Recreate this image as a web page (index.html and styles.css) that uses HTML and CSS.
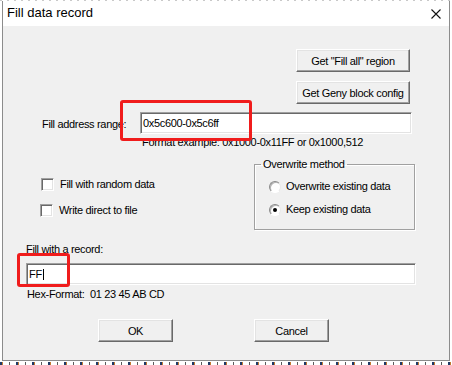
FILE: index.html
```html
<!DOCTYPE html>
<html lang="en">
<head>
    <meta charset="UTF-8">
    <meta name="viewport" content="width=device-width, initial-scale=1.0">
    <title>Fill data record</title>
    <link rel="stylesheet" href="styles.css">
</head>
<body>
    <div class="desk-top"></div>
    <div class="dialog">
        <div class="titlebar">
            <span class="title">Fill data record</span>
            <svg class="close" width="10" height="10" viewBox="0 0 10 10">
                <path d="M0.5 0.5 L9.5 9.5 M9.5 0.5 L0.5 9.5" stroke="#111" stroke-width="1.1" fill="none"/>
            </svg>
        </div>

        <div class="client">
            <div class="side-buttons">
                <button class="btn btn-wide">Get "Fill all" region</button>
                <button class="btn btn-wide">Get Geny block config</button>
            </div>

            <div class="address-row">
                <label class="address-label">Fill address range:</label>
                <div class="edit edit-address">
                    0x5c600-0x5c6ff
                    <span class="mark mark-address"></span>
                </div>
            </div>
            <p class="hint hint-address">Format example: 0x1000-0x11FF or 0x1000,512</p>

            <div class="options">
                <div class="checks">
                    <label class="check"><span class="box"></span>Fill with random data</label>
                    <label class="check check-second"><span class="box"></span>Write direct to file</label>
                </div>
                <fieldset class="group">
                    <legend>Overwrite method</legend>
                    <label class="radio"><span class="dot"></span>Overwrite existing data</label>
                    <label class="radio"><span class="dot dot-on"></span>Keep existing data</label>
                </fieldset>
            </div>

            <label class="record-label">Fill with a record:</label>
            <div class="edit edit-record">
                FF<span class="caret"></span>
                <span class="mark mark-record"></span>
            </div>
            <p class="hint hint-record">Hex-Format:&nbsp; 01 23 45 AB CD</p>

            <div class="footer">
                <button class="btn btn-ok">OK</button>
                <button class="btn btn-cancel">Cancel</button>
            </div>
        </div>
    </div>
    <div class="desk-bottom"></div>
</body>
</html>
```

FILE: styles.css
```css
body {
    margin: 0;
    background: #ffffff;
    font-family: "Liberation Sans", Arial, sans-serif;
    font-size: 11px;
    letter-spacing: -0.33px;
    color: #000;
    overflow: hidden;
}

.desk-top {
    height: 1px;
    background: repeating-linear-gradient(90deg, #c9c9c9 0 2px, transparent 2px 7px);
}

.dialog {
    margin-left: 2px;
    width: 448px;
    box-sizing: border-box;
    border: 1px solid #8c8c8c;
    border-top: none;
}

.titlebar {
    height: 25px;
    background: #ffffff;
    display: flex;
    justify-content: space-between;
    align-items: flex-start;
    padding: 4px 8px 0 4px;
    box-sizing: border-box;
}

.title {
    font-size: 13px;
    line-height: 15px;
    letter-spacing: 0;
    color: #000;
}

.close {
    margin-top: 4px;
}

.client {
    height: 334px;
    box-sizing: border-box;
    background: #f0f0f0;
    padding-top: 23px;
}

/* classic 3d push buttons */
.btn {
    font-family: inherit;
    font-size: 11px;
    letter-spacing: -0.33px;
    color: #000;
    background: #f0f0f0;
    height: 23px;
    padding: 0;
    border: 1px solid;
    border-color: #ffffff #696969 #696969 #ffffff;
    box-shadow: inset -1px -1px 0 #a0a0a0, inset 1px 1px 0 #e3e3e3;
    box-sizing: border-box;
}

.side-buttons {
    display: flex;
    flex-direction: column;
    align-items: flex-end;
    gap: 9px;
    padding-right: 39px;
}

.btn-wide {
    width: 114px;
}

.edit {
    position: relative;
    background: #ffffff;
    height: 22px;
    box-sizing: border-box;
    border: 1px solid;
    border-color: #a0a0a0 #ffffff #ffffff #a0a0a0;
    box-shadow: inset 1px 1px 0 #696969, inset -1px -1px 0 #e3e3e3;
    padding: 1px 0 0 2px;
    line-height: 17px;
    display: flex;
    align-items: center;
}

.address-row {
    display: flex;
    align-items: center;
    margin-top: 8px;
    padding-left: 39px;
}

.address-label {
    width: 98px;
    padding-top: 2px;
}

.edit-address {
    width: 272px;
}

.hint {
    margin: 0;
    line-height: 13px;
}

.hint-address {
    margin-top: 2px;
    padding-left: 139px;
}

/* red annotation boxes drawn over the screenshot */
.mark {
    position: absolute;
    border: 3px solid #f01c1c;
    border-radius: 3px;
    box-sizing: border-box;
}

.mark-address {
    left: -21px;
    top: -13px;
    width: 132px;
    height: 41px;
}

.mark-record {
    left: -10px;
    top: -11px;
    width: 53px;
    height: 34px;
}

.options {
    display: flex;
    margin-top: 9px;
}

.checks {
    width: 251px;
    padding: 20px 0 0 38px;
    box-sizing: border-box;
    display: flex;
    flex-direction: column;
    gap: 13px;
}

.check {
    display: flex;
    align-items: center;
    gap: 6px;
    line-height: 13px;
}

.check-second {
    margin-left: -1px;
}

.box {
    width: 13px;
    height: 13px;
    box-sizing: border-box;
    background: #ffffff;
    border: 1px solid;
    border-color: #a0a0a0 #ffffff #ffffff #a0a0a0;
    box-shadow: inset 1px 1px 0 #696969, inset -1px -1px 0 #e3e3e3;
}

.group {
    width: 161px;
    height: 72px;
    box-sizing: border-box;
    margin: 0;
    padding: 0 0 0 14px;
    border: 1px solid #a0a0a0;
    box-shadow: inset 1px 1px 0 #ffffff, 1px 1px 0 #ffffff;
    display: flex;
    flex-direction: column;
    gap: 10px;
}

.group legend {
    margin-left: -8px;
    padding: 0 2px;
    line-height: 13px;
}

.radio {
    display: flex;
    align-items: center;
    gap: 5px;
    line-height: 13px;
}

.radio:first-of-type {
    margin-top: 9px;
}

.dot {
    width: 12px;
    height: 12px;
    box-sizing: border-box;
    border-radius: 50%;
    background: #ffffff;
    border: 1px solid;
    border-color: #8a8a8a #e8e8e8 #ffffff #8a8a8a;
    box-shadow: inset 1px 1px 0 #b5b5b5;
    display: flex;
    align-items: center;
    justify-content: center;
}

.dot-on::after {
    content: "";
    width: 4px;
    height: 4px;
    border-radius: 50%;
    background: #000;
}

.record-label {
    display: block;
    margin-top: 13px;
    padding-left: 23px;
    line-height: 13px;
}

.edit-record {
    margin: 7px 0 0 23px;
    width: 390px;
}

.caret {
    display: inline-block;
    width: 1px;
    height: 11px;
    background: #000;
    margin-left: 1px;
}

.hint-record {
    margin-top: 3px;
    padding-left: 24px;
}

.footer {
    display: flex;
    gap: 81px;
    margin-top: 18px;
    padding-left: 95px;
}

.btn-ok,
.btn-cancel {
    width: 75px;
}

.desk-bottom {
    margin-top: 1px;
    height: 3px;
    background: repeating-linear-gradient(90deg, #203a66 0 2px, #c07830 2px 3px, transparent 3px 9px, #5a5a5a 9px 10px, transparent 10px 16px);
}
```
